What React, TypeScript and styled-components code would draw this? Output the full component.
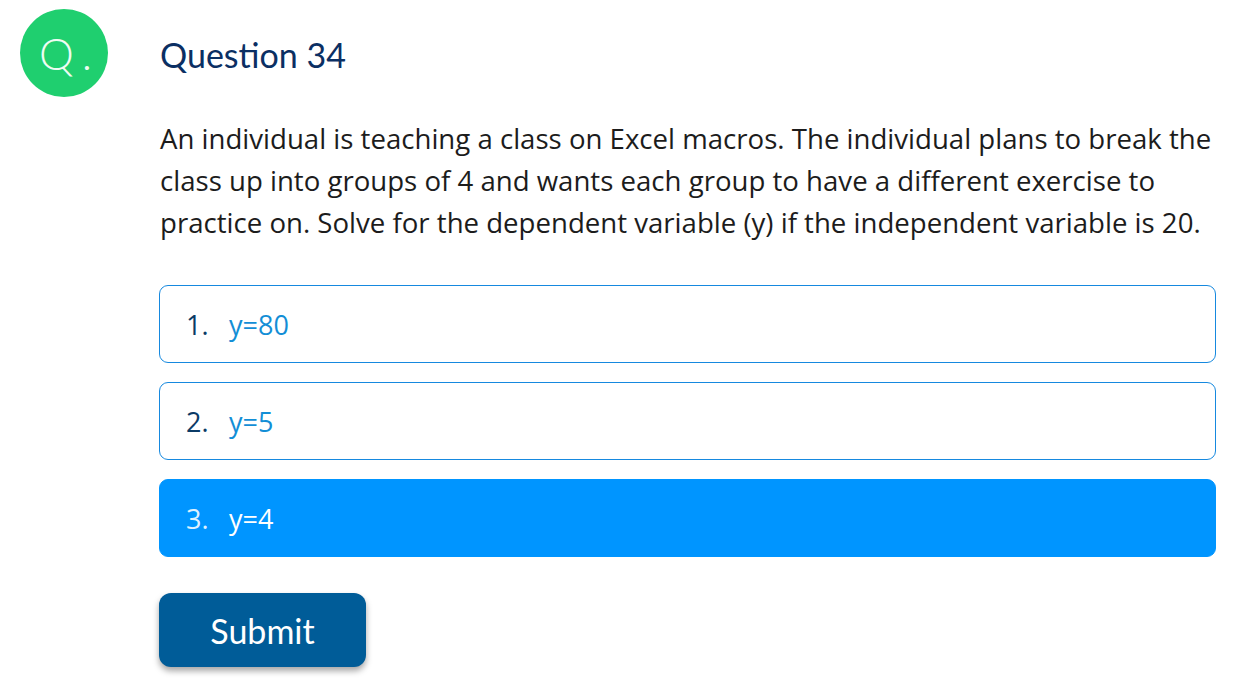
import React from "react";
import styled, { createGlobalStyle } from "styled-components";

const Global = createGlobalStyle`
  html, body { margin: 0; padding: 0; background: #ffffff; }
  body { font-family: "Open Sans", "Noto Sans", sans-serif; }
`;

const Page = styled.div`
  width: 1252px;
  height: 686px;
  box-sizing: border-box;
  padding: 9px 0 0 20px;
  overflow: hidden;
`;

const Header = styled.header`
  display: flex;
  align-items: center;
  gap: 52px;
`;

const Badge = styled.div`
  width: 88px;
  height: 88px;
  border-radius: 50%;
  background: #1fcf6f;
  color: #eefcf3;
  display: flex;
  align-items: center;
  justify-content: center;
  font-family: "Lato", sans-serif;
  font-weight: 300;
  font-size: 44px;
  letter-spacing: 9px;
  padding-left: 12px;
  box-sizing: border-box;
`;

const Title = styled.h1`
  margin: 0;
  font-family: "Lato", sans-serif;
  font-weight: 400;
  font-size: 34px;
  color: #0b2f63;
  margin-top: 2px;
`;

const Body = styled.main`
  margin-left: 139px;
  width: 1057px;
  display: flex;
  flex-direction: column;
`;

const Prompt = styled.p`
  margin: 20px 0 0 1px;
  font-size: 27.6px;
  line-height: 42px;
  color: #1c1c1c;
  white-space: nowrap;
`;

const Options = styled.ol`
  list-style: none;
  margin: 42px 0 0;
  padding: 0;
  display: flex;
  flex-direction: column;
  gap: 19px;
`;

const Option = styled.li<{ $selected?: boolean }>`
  height: 78px;
  box-sizing: border-box;
  border-radius: 9px;
  border: 1.5px solid ${(p) => (p.$selected ? "#0095ff" : "#1689df")};
  background: ${(p) => (p.$selected ? "#0095ff" : "#ffffff")};
  display: flex;
  align-items: center;
  padding-left: 26px;
  font-size: 27px;
`;

const Num = styled.span<{ $selected?: boolean }>`
  width: 43px;
  color: ${(p) => (p.$selected ? "#dff0ff" : "#0b3b66")};
`;

const Answer = styled.span<{ $selected?: boolean }>`
  color: ${(p) => (p.$selected ? "#ffffff" : "#138ed6")};
`;

const Submit = styled.button`
  margin-top: 36px;
  width: 207px;
  height: 74px;
  border: none;
  border-radius: 12px;
  background: #005c98;
  color: #ffffff;
  font-family: "Lato", sans-serif;
  font-size: 34px;
  box-shadow: 0 4px 6px rgba(0, 0, 0, 0.35);
  cursor: pointer;
`;

const options = ["y=80", "y=5", "y=4"];

export default function App() {
  return (
    <Page>
      <Global />
      <Header>
        <Badge>Q.</Badge>
        <Title>Question 34</Title>
      </Header>
      <Body>
        <Prompt>
          An individual is teaching a class on Excel macros. The individual plans to break the
          <br />
          class up into groups of 4 and wants each group to have a different exercise to
          <br />
          practice on. Solve for the dependent variable (y) if the independent variable is 20.
        </Prompt>
        <Options>
          {options.map((o, i) => {
            const sel = i === 2;
            return (
              <Option key={o} $selected={sel}>
                <Num $selected={sel}>{i + 1}.</Num>
                <Answer $selected={sel}>{o}</Answer>
              </Option>
            );
          })}
        </Options>
        <Submit>Submit</Submit>
      </Body>
    </Page>
  );
}
